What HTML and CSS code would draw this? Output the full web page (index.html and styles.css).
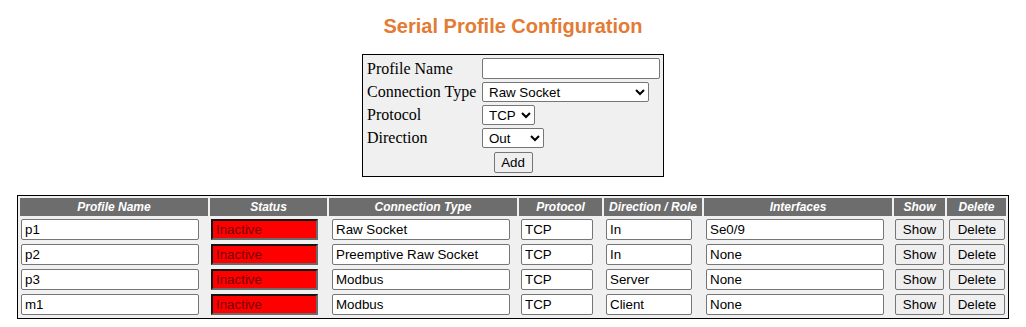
FILE: index.html
```html
<!DOCTYPE html>
<html lang="en">
<head>
  <meta charset="UTF-8">
  <title>Serial Profile Configuration</title>
  <link rel="stylesheet" href="styles.css">
</head>
<body>
  <h1 class="title">Serial Profile Configuration</h1>

  <table class="form">
    <tr>
      <td class="label">Profile Name</td>
      <td><input type="text" class="in-name"></td>
    </tr>
    <tr>
      <td class="label">Connection Type</td>
      <td>
        <select class="sel-type">
          <option>Raw Socket</option>
          <option>Preemptive Raw Socket</option>
          <option>Modbus</option>
        </select>
      </td>
    </tr>
    <tr>
      <td class="label">Protocol</td>
      <td>
        <select class="sel-proto">
          <option>TCP</option>
          <option>UDP</option>
        </select>
      </td>
    </tr>
    <tr>
      <td class="label">Direction</td>
      <td>
        <select class="sel-dir">
          <option>Out</option>
          <option>In</option>
        </select>
      </td>
    </tr>
    <tr>
      <td colspan="2" class="center"><button class="btn-add">Add</button></td>
    </tr>
  </table>

  <table class="profiles">
    <tr>
      <th class="c-name">Profile Name</th>
      <th class="c-status">Status</th>
      <th class="c-type">Connection Type</th>
      <th class="c-proto">Protocol</th>
      <th class="c-dir">Direction / Role</th>
      <th class="c-iface">Interfaces</th>
      <th class="c-show">Show</th>
      <th class="c-del">Delete</th>
    </tr>
    <tr>
      <td><input type="text" class="f-name" value="p1" readonly></td>
      <td><input type="text" class="f-status" value="Inactive" readonly></td>
      <td><input type="text" class="f-type" value="Raw Socket" readonly></td>
      <td><input type="text" class="f-proto" value="TCP" readonly></td>
      <td><input type="text" class="f-dir" value="In" readonly></td>
      <td><input type="text" class="f-iface" value="Se0/9" readonly></td>
      <td><button class="b-show">Show</button></td>
      <td><button class="b-del">Delete</button></td>
    </tr>
    <tr>
      <td><input type="text" class="f-name" value="p2" readonly></td>
      <td><input type="text" class="f-status" value="Inactive" readonly></td>
      <td><input type="text" class="f-type" value="Preemptive Raw Socket" readonly></td>
      <td><input type="text" class="f-proto" value="TCP" readonly></td>
      <td><input type="text" class="f-dir" value="In" readonly></td>
      <td><input type="text" class="f-iface" value="None" readonly></td>
      <td><button class="b-show">Show</button></td>
      <td><button class="b-del">Delete</button></td>
    </tr>
    <tr>
      <td><input type="text" class="f-name" value="p3" readonly></td>
      <td><input type="text" class="f-status" value="Inactive" readonly></td>
      <td><input type="text" class="f-type" value="Modbus" readonly></td>
      <td><input type="text" class="f-proto" value="TCP" readonly></td>
      <td><input type="text" class="f-dir" value="Server" readonly></td>
      <td><input type="text" class="f-iface" value="None" readonly></td>
      <td><button class="b-show">Show</button></td>
      <td><button class="b-del">Delete</button></td>
    </tr>
    <tr>
      <td><input type="text" class="f-name" value="m1" readonly></td>
      <td><input type="text" class="f-status" value="Inactive" readonly></td>
      <td><input type="text" class="f-type" value="Modbus" readonly></td>
      <td><input type="text" class="f-proto" value="TCP" readonly></td>
      <td><input type="text" class="f-dir" value="Client" readonly></td>
      <td><input type="text" class="f-iface" value="None" readonly></td>
      <td><button class="b-show">Show</button></td>
      <td><button class="b-del">Delete</button></td>
    </tr>
  </table>
</body>
</html>
```

FILE: styles.css
```css
body {
  margin: 8px;
  background-color: #fff;
  font-family: "Liberation Serif", serif;
}

input, select, button {
  font-family: "Liberation Sans", Arial, sans-serif;
  font-size: 13.333px;
  margin: 0;
  box-sizing: border-box;
}

input {
  height: 21px;
  padding: 1px 3px;
  border: 1px solid #767676;
  border-radius: 2px;
  background-color: #fff;
  color: #000;
}

select {
  height: 20px;
  padding: 0 0 0 2px;
  border: 1px solid #767676;
  border-radius: 2px;
  background-color: #fff;
  color: #000;
}

button {
  height: 21px;
  padding: 1px 6px;
  border: 1px solid #767676;
  border-radius: 2px;
  background-color: #efefef;
  color: #000;
}

.title {
  margin: 7px 0 16px;
  font-family: "Liberation Sans", Arial, sans-serif;
  font-size: 20px;
  line-height: 23px;
  font-weight: bold;
  color: #e37b35;
  text-align: center;
}

/* add profile form */
.form {
  margin: 0 auto;
  border: 1px solid #000;
  border-spacing: 2px;
  background-color: #f0f0f0;
}

.form td {
  padding: 1px 1px 0;
  font-size: 16px;
  line-height: 18px;
  white-space: nowrap;
}

.form .label {
  width: 112px;
  padding-left: 2px;
  padding-right: 0;
}

.form .center {
  text-align: center;
  padding-top: 2px;
  padding-bottom: 1px;
}

.in-name { width: 178px; }
.sel-type { width: 167px; }
.sel-proto { width: 53px; }
.sel-dir { width: 62px; }
.btn-add { width: 39px; height: 21px; padding: 0; }

/* profile list */
.profiles {
  margin: 18px auto 0;
  border: 1px solid #000;
  border-spacing: 2px;
  background-color: #f0f0f0;
}

.profiles th {
  padding: 1px 2px;
  height: 16px;
  background-color: #6d6d6d;
  color: #fff;
  font-family: "Liberation Sans", Arial, sans-serif;
  font-size: 12px;
  line-height: 16px;
  font-style: italic;
  font-weight: bold;
  text-align: center;
  white-space: nowrap;
}

.profiles td {
  padding: 1px 1px;
  text-align: left;
}

.c-name { width: 184px; }
.c-status { width: 113px; }
.c-type { width: 184px; }
.c-proto { width: 79px; }
.c-dir { width: 94px; }
.c-iface { width: 184px; }
.c-show { width: 46px; }
.c-del { width: 54px; }

.f-name { width: 178px; }
.f-type { width: 178px; margin-left: 2px; }
.f-proto { width: 72px; margin-left: 1px; }
.f-dir { width: 86px; margin-left: 1px; }
.f-iface { width: 178px; margin-left: 1px; }

.f-status {
  width: 107px;
  border: 2px inset #6a6a6a;
  border-radius: 0;
  background-color: #ff0000;
  color: #760000;
}

.b-show { width: 49px; padding: 0; }
.b-del { width: 56px; padding: 0; margin-left: 1px; }
```
